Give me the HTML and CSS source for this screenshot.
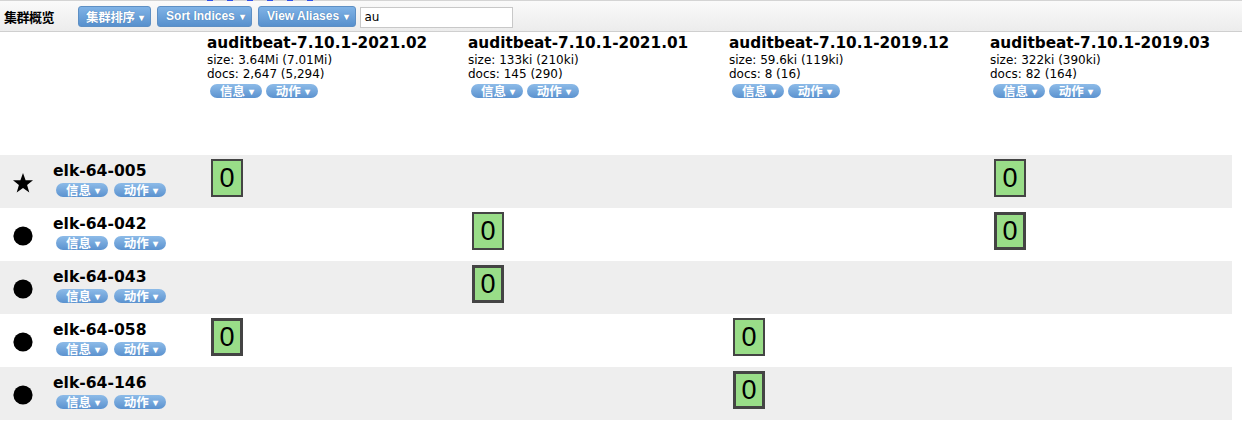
FILE: index.html
```html
<!DOCTYPE html>
<html>
<head>
<meta charset="utf-8">
<link rel="stylesheet" href="styles.css">
</head>
<body>
<div class="topbar">
  <span class="bar-title">集群概览</span>
  <span class="btn cjk">集群排序 <i class="caret">▾</i></span>
  <span class="btn">Sort Indices <i class="caret">▾</i></span>
  <span class="btn">View Aliases <i class="caret">▾</i></span>
  <input class="filter" type="text" value="au">
  <span class="ghost"></span>
</div>
<div class="grid">
  <div class="cell head"></div>
  <div class="cell head">
    <div class="iname">auditbeat-7.10.1-2021.02</div>
    <div class="meta">size: 3.64Mi (7.01Mi)</div>
    <div class="meta">docs: 2,647 (5,294)</div>
    <div class="pills"><span class="pill">信息 <i class="caret">▾</i></span><span class="pill">动作 <i class="caret">▾</i></span></div>
  </div>
  <div class="cell head">
    <div class="iname">auditbeat-7.10.1-2021.01</div>
    <div class="meta">size: 133ki (210ki)</div>
    <div class="meta">docs: 145 (290)</div>
    <div class="pills"><span class="pill">信息 <i class="caret">▾</i></span><span class="pill">动作 <i class="caret">▾</i></span></div>
  </div>
  <div class="cell head">
    <div class="iname">auditbeat-7.10.1-2019.12</div>
    <div class="meta">size: 59.6ki (119ki)</div>
    <div class="meta">docs: 8 (16)</div>
    <div class="pills"><span class="pill">信息 <i class="caret">▾</i></span><span class="pill">动作 <i class="caret">▾</i></span></div>
  </div>
  <div class="cell head">
    <div class="iname">auditbeat-7.10.1-2019.03</div>
    <div class="meta">size: 322ki (390ki)</div>
    <div class="meta">docs: 82 (164)</div>
    <div class="pills"><span class="pill">信息 <i class="caret">▾</i></span><span class="pill">动作 <i class="caret">▾</i></span></div>
  </div>

  <!-- row 1 -->
  <div class="cell node gray">
    <svg class="ico" viewBox="0 0 20 20"><polygon points="10,0 12.6,7.3 20,7.3 14.1,11.9 16.3,19.5 10,15 3.7,19.5 5.9,11.9 0,7.3 7.4,7.3" fill="#000"/></svg>
    <div class="ninfo"><div class="nname">elk-64-005</div><div class="pills np"><span class="pill">信息 <i class="caret">▾</i></span><span class="pill">动作 <i class="caret">▾</i></span></div></div>
  </div>
  <div class="cell gray"><span class="shard">0</span></div>
  <div class="cell gray"></div>
  <div class="cell gray"></div>
  <div class="cell gray"><span class="shard">0</span></div>

  <!-- row 2 -->
  <div class="cell node">
    <svg class="ico" viewBox="0 0 20 20"><circle cx="10" cy="10" r="9.6" fill="#000"/></svg>
    <div class="ninfo"><div class="nname">elk-64-042</div><div class="pills np"><span class="pill">信息 <i class="caret">▾</i></span><span class="pill">动作 <i class="caret">▾</i></span></div></div>
  </div>
  <div class="cell"></div>
  <div class="cell"><span class="shard">0</span></div>
  <div class="cell"></div>
  <div class="cell"><span class="shard primary">0</span></div>

  <!-- row 3 -->
  <div class="cell node gray">
    <svg class="ico" viewBox="0 0 20 20"><circle cx="10" cy="10" r="9.6" fill="#000"/></svg>
    <div class="ninfo"><div class="nname">elk-64-043</div><div class="pills np"><span class="pill">信息 <i class="caret">▾</i></span><span class="pill">动作 <i class="caret">▾</i></span></div></div>
  </div>
  <div class="cell gray"></div>
  <div class="cell gray"><span class="shard primary">0</span></div>
  <div class="cell gray"></div>
  <div class="cell gray"></div>

  <!-- row 4 -->
  <div class="cell node">
    <svg class="ico" viewBox="0 0 20 20"><circle cx="10" cy="10" r="9.6" fill="#000"/></svg>
    <div class="ninfo"><div class="nname">elk-64-058</div><div class="pills np"><span class="pill">信息 <i class="caret">▾</i></span><span class="pill">动作 <i class="caret">▾</i></span></div></div>
  </div>
  <div class="cell"><span class="shard primary">0</span></div>
  <div class="cell"></div>
  <div class="cell"><span class="shard">0</span></div>
  <div class="cell"></div>

  <!-- row 5 -->
  <div class="cell node gray">
    <svg class="ico" viewBox="0 0 20 20"><circle cx="10" cy="10" r="9.6" fill="#000"/></svg>
    <div class="ninfo"><div class="nname">elk-64-146</div><div class="pills np"><span class="pill">信息 <i class="caret">▾</i></span><span class="pill">动作 <i class="caret">▾</i></span></div></div>
  </div>
  <div class="cell gray"></div>
  <div class="cell gray"></div>
  <div class="cell gray"><span class="shard primary">0</span></div>
  <div class="cell gray"></div>
</div>
</body>
</html>
```

FILE: styles.css
```css
html, body {
  margin: 0;
  padding: 0;
  background: #fff;
}
body {
  font-family: "DejaVu Sans", Verdana, sans-serif;
  font-size: 12px;
  color: #000;
}
.topbar {
  position: relative;
  height: 30px;
  border-top: 1px solid #d4d4d4;
  border-bottom: 1px solid #cfcfcf;
  background: linear-gradient(#fafafa, #ececec);
  display: flex;
  align-items: center;
}
.bar-title {
  font-family: "Noto Sans CJK SC", sans-serif;
  font-weight: bold;
  font-size: 13px;
  margin-left: 4px;
  width: 74px;
  letter-spacing: -0.5px;
}
.btn {
  display: inline-flex;
  align-items: center;
  height: 19px;
  padding: 0 6px 0 8px;
  margin-right: 6px;
  border: 1px solid #5d8fc4;
  border-radius: 3px;
  background: linear-gradient(#80b3e6, #5790cd);
  color: #fff;
  font-family: "Liberation Sans", Arial, sans-serif;
  font-weight: bold;
  font-size: 12px;
  text-shadow: 0 0 1px #3a6ea5;
  white-space: pre;
}
.btn.cjk {
  font-family: "Noto Sans CJK SC", sans-serif;
  font-size: 12.5px;
  letter-spacing: -0.3px;
  padding: 0 6px 0 7px;
}
.caret {
  font-style: normal;
  font-size: 10px;
  margin-left: 2px;
}
.filter {
  margin: 2px 0 0 -2px;
  width: 153px;
  height: 21px;
  box-sizing: border-box;
  border: 1px solid #c8c8c8;
  padding: 0 3px;
  font-family: "DejaVu Sans", sans-serif;
  font-size: 12px;
  background: #fff;
}
.ghost {
  position: absolute;
  left: 207px;
  top: -1px;
  width: 112px;
  height: 1px;
  background: repeating-linear-gradient(90deg, #3050e8 0 6px, transparent 6px 20px);
}
.grid {
  display: grid;
  grid-template-columns: 207px 261px 261px 261px 242px;
  grid-template-rows: 123px repeat(5, 53px);
  width: 1232px;
}
.cell {
  box-sizing: border-box;
}
.gray {
  background: #eeeeee;
}
.head {
  padding-top: 2px;
}
.iname {
  font-weight: bold;
  font-size: 15.3px;
  line-height: 19px;
}
.meta {
  line-height: 14px;
}
.pills {
  display: flex;
  gap: 4px;
  margin-top: 3px;
  margin-left: 3px;
}
.pill {
  display: inline-flex;
  align-items: center;
  height: 14px;
  padding: 0 8px 0 10px;
  border-radius: 7px;
  background: linear-gradient(#8dbbe8, #5b92cf);
  color: #fff;
  font-family: "Noto Sans CJK SC", sans-serif;
  font-weight: bold;
  font-size: 12.5px;
  line-height: 14px;
  white-space: pre;
}
.pill .caret {
  font-size: 10px;
  margin-left: 1px;
}
.np {
  gap: 6px;
  margin-top: 2px;
}
.node {
  display: flex;
  align-items: center;
  padding-left: 13px;
}
.ico {
  width: 20px;
  height: 20px;
  flex: none;
  margin-top: 2px;
}
.ninfo {
  margin-left: 20px;
  margin-top: -4px;
}
.nname {
  font-weight: bold;
  font-size: 15.6px;
  line-height: 19px;
}
.shard {
  display: flex;
  align-items: center;
  justify-content: center;
  width: 32px;
  height: 38px;
  box-sizing: border-box;
  margin: 4px 0 0 4px;
  border: 2px solid #444;
  background: #99dd88;
  font-family: "Liberation Sans", Arial, sans-serif;
  font-size: 27px;
  line-height: 1;
}
.shard.primary {
  border-width: 3px;
}
```
